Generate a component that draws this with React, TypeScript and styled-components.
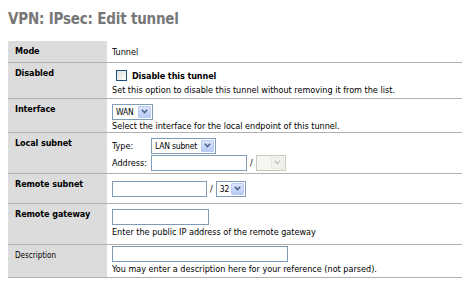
import React from "react";
import styled, { createGlobalStyle } from "styled-components";

const Global = createGlobalStyle`
  html, body { margin: 0; padding: 0; background: #fff; }
  body { font-family: "DejaVu Sans Condensed", "DejaVu Sans", sans-serif; font-size: 9px; color: #000; }
`;

const Page = styled.div`
  padding: 8px 12px 0 8px;
`;

const Title = styled.h1`
  margin: 1px 0 0 0;
  font-size: 15px;
  line-height: 20px;
  font-weight: bold;
  color: #777;
  letter-spacing: -0.2px;
`;

const Table = styled.table`
  margin-top: 12px;
  width: 454px;
  border-collapse: collapse;
  border-spacing: 0;
`;

const Row = styled.tr<{ $h: number }>`
  height: ${(p) => p.$h}px;
  border-bottom: 1px solid #b0b0b0;
`;

const Label = styled.td<{ $plain?: boolean }>`
  width: 92px;
  background: #dcdcdc;
  padding: ${(p) => (p.$plain ? "5px" : "4px")} 0 0 7px;
  vertical-align: top;
  font-weight: ${(p) => (p.$plain ? "normal" : "bold")};
  font-size: ${(p) => (p.$plain ? "8px" : "9px")};
  letter-spacing: ${(p) => (p.$plain ? "0" : "-0.1px")};
  line-height: 12px;
`;

const Cell = styled.td<{ $pt?: number }>`
  padding: ${(p) => p.$pt ?? 5}px 0 0 5px;
  vertical-align: top;
  line-height: 12px;
`;

const Line = styled.div<{ $gap?: number }>`
  display: flex;
  align-items: center;
  justify-content: flex-start;
  gap: ${(p) => p.$gap ?? 3}px;
`;

const Check = styled.span`
  display: inline-block;
  flex: none;
  box-sizing: border-box;
  width: 11px;
  height: 11px;
  border: 1px solid #1c5180;
  background: linear-gradient(135deg, #dcdcd7, #fff);
  margin-left: 4px;
`;

const CheckText = styled.span`
  font-weight: bold;
  font-size: 9px;
  letter-spacing: -0.1px;
  margin-left: 2px;
`;

const Help = styled.div<{ $mt?: number }>`
  margin-top: ${(p) => p.$mt ?? 2}px;
`;

const Input = styled.span<{ $w: number }>`
  display: inline-block;
  flex: none;
  box-sizing: border-box;
  width: ${(p) => p.$w}px;
  height: 16px;
  border: 1px solid #7f9db9;
  background: #fff;
  vertical-align: top;
`;

const SelectBox = styled.span<{ $w: number; $disabled?: boolean }>`
  display: inline-flex;
  flex: none;
  box-sizing: border-box;
  width: ${(p) => p.$w}px;
  height: 16px;
  border: 1px solid ${(p) => (p.$disabled ? "#c9c7ba" : "#7f9db9")};
  background: ${(p) => (p.$disabled ? "#f5f5f2" : "#fff")};
  align-items: center;
  padding: 1px;
  vertical-align: top;
`;

const SelectText = styled.span`
  flex: 1;
  min-width: 0;
  overflow: hidden;
  padding-left: 2px;
  font-size: 8.5px;
  letter-spacing: -0.2px;
  white-space: nowrap;
`;

const Arrow = styled.span<{ $disabled?: boolean }>`
  flex: none;
  width: 13px;
  height: 12px;
  box-sizing: border-box;
  border: 1px solid ${(p) => (p.$disabled ? "#e8e8e4" : "#b9c9ef")};
  border-radius: 1px;
  background: ${(p) => (p.$disabled ? "#f2f2ee" : "linear-gradient(#dce6fb, #b6cbf7)")};
  display: flex;
  align-items: center;
  justify-content: center;
`;

const Slash = styled.span`
  flex: none;
`;

const SubGrid = styled.div`
  display: grid;
  grid-template-columns: 39px 1fr;
  row-gap: 1px;
  align-items: center;
`;

const Chevron = ({ disabled }: { disabled?: boolean }) => (
  <svg width="7" height="5" viewBox="0 0 7 5">
    <path d="M0.8 0.8 L3.5 3.5 L6.2 0.8" fill="none" stroke={disabled ? "#c9c9c0" : "#4d6185"} strokeWidth="1.6" />
  </svg>
);

const Select = ({ w, text, disabled }: { w: number; text?: string; disabled?: boolean }) => (
  <SelectBox $w={w} $disabled={disabled}>
    <SelectText>{text}</SelectText>
    <Arrow $disabled={disabled}>
      <Chevron disabled={disabled} />
    </Arrow>
  </SelectBox>
);

export default function App() {
  return (
    <Page>
      <Global />
      <Title>VPN: IPsec: Edit tunnel</Title>
      <Table>
        <tbody>
          <Row $h={21}>
            <Label>Mode</Label>
            <Cell>Tunnel</Cell>
          </Row>
          <Row $h={36}>
            <Label>Disabled</Label>
            <Cell $pt={7}>
              <Line>
                <Check />
                <CheckText>Disable this tunnel</CheckText>
              </Line>
              <Help>Set this option to disable this tunnel without removing it from the list.</Help>
            </Cell>
          </Row>
          <Row $h={34}>
            <Label>Interface</Label>
            <Cell $pt={5}>
              <Select w={41} text="WAN" />
              <Help $mt={0}>Select the interface for the local endpoint of this tunnel.</Help>
            </Cell>
          </Row>
          <Row $h={41}>
            <Label>Local subnet</Label>
            <Cell $pt={5}>
              <SubGrid>
                <span>Type:</span>
                <Line>
                  <Select w={65} text="LAN subnet" />
                </Line>
                <span>Address:</span>
                <Line>
                  <Input $w={96} />
                  <Slash>/</Slash>
                  <Select w={30} disabled />
                </Line>
              </SubGrid>
            </Cell>
          </Row>
          <Row $h={30}>
            <Label>Remote subnet</Label>
            <Cell $pt={7}>
              <Line>
                <Input $w={95} />
                <Slash>/</Slash>
                <Select w={30} text="32" />
              </Line>
            </Cell>
          </Row>
          <Row $h={41}>
            <Label>Remote gateway</Label>
            <Cell $pt={5}>
              <Input $w={97} />
              <Help $mt={1}>Enter the public IP address of the remote gateway</Help>
            </Cell>
          </Row>
          <Row $h={33}>
            <Label $plain>Description</Label>
            <Cell $pt={1}>
              <Input $w={176} />
              <Help $mt={1}>You may enter a description here for your reference (not parsed).</Help>
            </Cell>
          </Row>
        </tbody>
      </Table>
    </Page>
  );
}
